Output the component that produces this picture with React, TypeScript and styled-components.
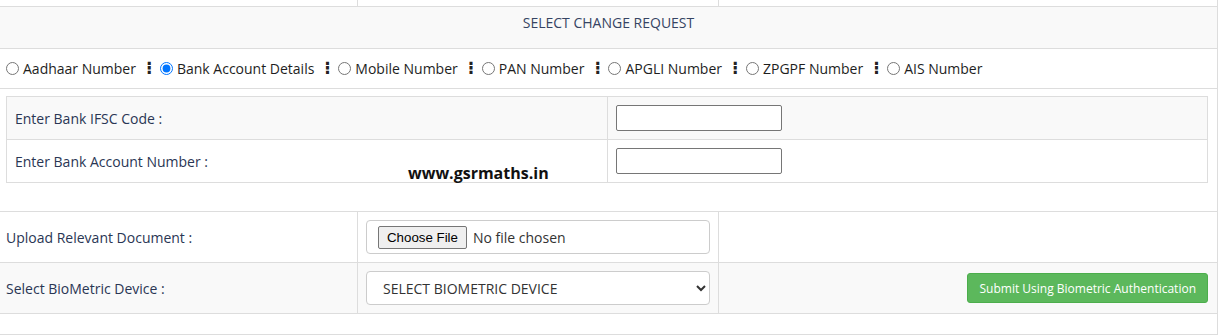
import React from 'react';
import styled, { createGlobalStyle } from 'styled-components';

const GlobalStyle = createGlobalStyle`
  * { box-sizing: border-box; }
  body {
    margin: 0;
    background: #fff;
    font-family: "Open Sans", "Liberation Sans", sans-serif;
    color: #333;
  }
`;

const Panel = styled.div`
  position: relative;
  width: 1218px;
  border-right: 1px solid #ddd;
`;

const Row = styled.div<{ $striped?: boolean; $height: number }>`
  display: grid;
  grid-template-columns: 358px 361px 1fr;
  height: ${p => p.$height + 1}px;
  border-bottom: 1px solid #ddd;
  background: ${p => (p.$striped ? '#f9f9f9' : '#fff')};
`;

const Cell = styled.div<{ $align?: 'start' | 'end' }>`
  display: flex;
  align-items: center;
  justify-content: ${p => (p.$align === 'end' ? 'flex-end' : 'flex-start')};
  padding: 0 8px;
  border-right: 1px solid #ddd;

  &:last-child {
    border-right: none;
    padding-right: 9px;
  }
`;

const Label = styled.span`
  font-size: 14px;
  color: #2a3654;
  margin-left: -2px;
`;

const HeaderRow = styled.div`
  height: 42px;
  padding-top: 5px;
  border-bottom: 1px solid #ddd;
  background: #f9f9f9;
  text-align: center;
  font-size: 14px;
  line-height: 22px;
  color: #364463;
`;

const RadioRow = styled.div`
  display: flex;
  align-items: center;
  gap: 10px;
  height: 40px;
  padding-left: 6px;
  border-bottom: 1px solid #ddd;
  font-size: 14px;
  color: #1e1e1e;
`;

const RadioLabel = styled.label`
  display: flex;
  align-items: center;
  gap: 4px;
  white-space: nowrap;

  input {
    margin: 0;
    width: 13px;
    height: 13px;
  }
`;

const Divider = styled.span`
  font-family: "DejaVu Sans", sans-serif;
  font-weight: 700;
  font-size: 17px;
  line-height: 17px;
  color: #222;
  width: 4px;
  text-align: center;
`;

const SectionRow = styled.div`
  height: 123px;
  padding: 7px 9px 0 6px;
  border-bottom: 1px solid #ddd;
`;

const InnerTable = styled.div`
  border: 1px solid #ddd;
  border-bottom: none;
`;

const InnerRow = styled.div<{ $striped?: boolean }>`
  display: grid;
  grid-template-columns: 601px 1fr;
  height: 43px;
  border-bottom: 1px solid #ddd;
  background: ${p => (p.$striped ? '#f9f9f9' : '#fff')};
`;

const InnerLabel = styled.div`
  display: flex;
  align-items: center;
  padding-left: 8px;
  border-right: 1px solid #ddd;
  font-size: 14px;
  color: #2a3654;
`;

const InnerField = styled.div`
  padding: 8px 8px 0;
`;

const TextInput = styled.input`
  display: block;
  width: 166px;
  height: 26px;
  border: 1px solid #767676;
  border-radius: 2px;
  background: #fff;
`;

const FileBox = styled.label`
  display: flex;
  align-items: center;
  gap: 6px;
  width: 344px;
  height: 34px;
  padding: 0 11px;
  border: 1px solid #ccc;
  border-radius: 4px;
  background: #fff;
  font-size: 14px;
  color: #333;
`;

const FileButton = styled.span`
  display: inline-flex;
  align-items: center;
  height: 23px;
  padding: 0 8px;
  border: 1px solid #767676;
  border-radius: 2px;
  background: #efefef;
  font-family: "Liberation Sans", Arial, sans-serif;
  font-size: 13.3px;
  color: #000;
`;

const Select = styled.select`
  width: 344px;
  height: 34px;
  padding: 0 8px 0 12px;
  border: 1px solid #ccc;
  border-radius: 4px;
  background: #fff;
  font-family: "Open Sans", sans-serif;
  font-size: 14px;
  color: #333;
`;

const SubmitButton = styled.button`
  height: 30px;
  padding: 0 11px;
  border: 1px solid #4cae4c;
  border-radius: 3px;
  background: #5cb85c;
  color: #fff;
  font-family: "Open Sans", sans-serif;
  font-size: 12px;
`;

const Watermark = styled.div`
  position: absolute;
  left: 408px;
  top: 162px;
  font-size: 16px;
  font-weight: 700;
  line-height: 22px;
  color: #111;
`;

const options = [
  'Aadhaar Number',
  'Bank Account Details',
  'Mobile Number',
  'PAN Number',
  'APGLI Number',
  'ZPGPF Number',
  'AIS Number',
];

const App: React.FC = () => {
  return (
    <Panel>
      <GlobalStyle />
      <Row $height={6}>
        <Cell />
        <Cell />
        <Cell />
      </Row>

      <HeaderRow>SELECT CHANGE REQUEST</HeaderRow>

      <RadioRow>
        {options.map((opt, i) => (
          <React.Fragment key={opt}>
            {i > 0 && <Divider>⁝</Divider>}
            <RadioLabel>
              <input type="radio" name="change" defaultChecked={opt === 'Bank Account Details'} />
              {opt}
            </RadioLabel>
          </React.Fragment>
        ))}
      </RadioRow>

      <SectionRow>
        <InnerTable>
          <InnerRow $striped>
            <InnerLabel>Enter Bank IFSC Code :</InnerLabel>
            <InnerField>
              <TextInput type="text" />
            </InnerField>
          </InnerRow>
          <InnerRow>
            <InnerLabel>Enter Bank Account Number :</InnerLabel>
            <InnerField>
              <TextInput type="text" />
            </InnerField>
          </InnerRow>
        </InnerTable>
      </SectionRow>

      <Row $height={50}>
        <Cell>
          <Label>Upload Relevant Document :</Label>
        </Cell>
        <Cell>
          <FileBox>
            <FileButton>Choose File</FileButton>
            No file chosen
          </FileBox>
        </Cell>
        <Cell />
      </Row>

      <Row $height={50} $striped>
        <Cell>
          <Label>Select BioMetric Device :</Label>
        </Cell>
        <Cell>
          <Select defaultValue="">
            <option value="">SELECT BIOMETRIC DEVICE</option>
          </Select>
        </Cell>
        <Cell $align="end">
          <SubmitButton>Submit Using Biometric Authentication</SubmitButton>
        </Cell>
      </Row>

      <Row $height={20}>
        <div />
      </Row>

      <Watermark>www.gsrmaths.in</Watermark>
    </Panel>
  );
};

export default App;
